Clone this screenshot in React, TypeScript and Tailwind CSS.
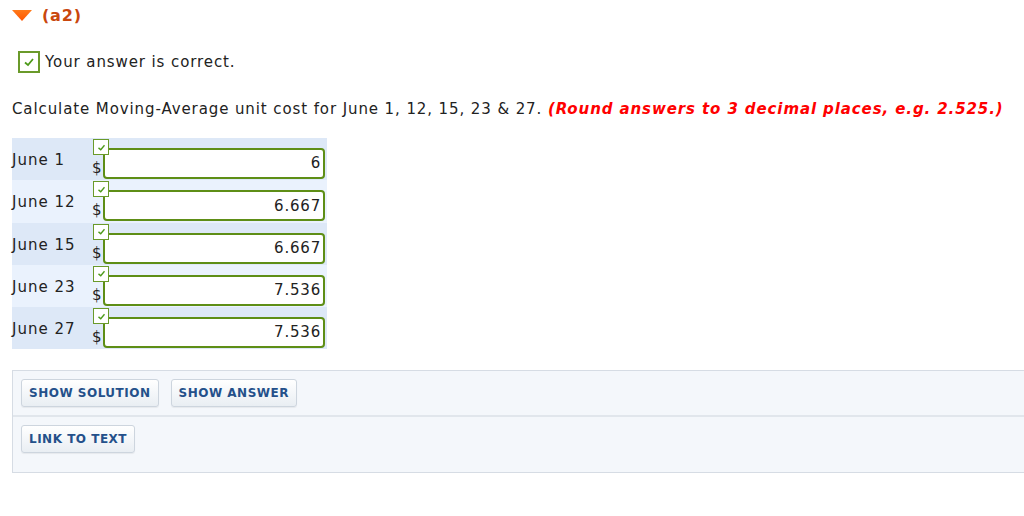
import React from "react";

const rows = [
  { label: "June 1", value: "6" },
  { label: "June 12", value: "6.667" },
  { label: "June 15", value: "6.667" },
  { label: "June 23", value: "7.536" },
  { label: "June 27", value: "7.536" },
];

function Check({ size }: { size: "lg" | "sm" }) {
  const box = size === "lg" ? "w-[22px] h-[22px] border-2" : "w-[16px] h-[16px] border";
  return (
    <div className={`${box} border-[#6a9a2a] bg-white flex items-center justify-center`}>
      <svg viewBox="0 0 12 12" className={size === "lg" ? "w-[12px] h-[12px]" : "w-[9px] h-[9px]"}>
        <path d="M2 6.5 L5 9 L10 3" fill="none" stroke="#4d9a1a" strokeWidth="1.8" />
      </svg>
    </div>
  );
}

function Btn({ children }: { children: React.ReactNode }) {
  return (
    <button className="h-[28px] px-[7px] rounded-[3px] border border-[#cdd5de] bg-gradient-to-b from-white to-[#e9eef3] text-[12px] font-bold tracking-[0.5px] text-[#24508a] shadow-[0_1px_1px_rgba(0,0,0,0.06)]">
      {children}
    </button>
  );
}

export default function App() {
  return (
    <div className="w-[1024px] h-[516px] bg-white overflow-hidden font-['DejaVu_Sans',Verdana,sans-serif] text-[#222]">
      {/* Header */}
      <div className="flex items-center gap-[10px] pl-[12px] pt-[5px] h-[26px]">
        <svg viewBox="0 0 20 11" className="w-[20px] h-[11px]">
          <defs>
            <linearGradient id="tri" x1="0" y1="0" x2="0" y2="1">
              <stop offset="0" stopColor="#ff7a1a" />
              <stop offset="1" stopColor="#ff5500" />
            </linearGradient>
          </defs>
          <path d="M0 0 H20 L10 11 Z" fill="url(#tri)" />
        </svg>
        <span className="text-[16px] font-bold tracking-[0.8px] text-[#c9470d]">(a2)</span>
      </div>

      {/* Correct notice */}
      <div className="flex items-center gap-[5px] pl-[18px] mt-[24px]">
        <Check size="lg" />
        <span className="text-[15px] tracking-[0.9px] pt-[1px]">Your answer is correct.</span>
      </div>

      {/* Question */}
      <div className="pl-[12px] mt-[24px] text-[15px] tracking-[0.9px] whitespace-nowrap">
        Calculate Moving-Average unit cost for June 1, 12, 15, 23 &amp; 27.{" "}
        <span className="font-bold italic text-[#ff0000]">(Round answers to 3 decimal places, e.g. 2.525.)</span>
      </div>

      {/* Table */}
      <div className="ml-[12px] mt-[18px] w-[315px] flex flex-col">
        {rows.map((r, i) => (
          <div key={r.label} className={`flex h-[42.3px] ${i % 2 === 0 ? "bg-[#dde8f7]" : "bg-[#eaf2fd]"}`}>
            <div className="w-[80px] pt-[12px] text-[15px] tracking-[1px] leading-[20px]">{r.label}</div>
            <div className="relative flex-1">
              <div className="absolute left-[1px] top-[1px] z-10">
                <Check size="sm" />
              </div>
              <span className="absolute left-[0px] top-[20px] text-[15px] leading-[20px]">$</span>
              <div className="absolute left-[11px] right-[2px] top-[10px] h-[31px] rounded-[4px] border-2 border-[#5e8e16] bg-white flex items-center justify-end pr-[2px] text-[15px] tracking-[0.8px]">
                {r.value}
              </div>
            </div>
          </div>
        ))}
      </div>

      {/* Button panel */}
      <div className="ml-[12px] mt-[21px] w-[1020px] border border-[#d6dce4] bg-[#f4f7fb]">
        <div className="flex gap-[12px] px-[8px] pt-[8px] pb-[8px] border-b-2 border-[#e1e6ec]">
          <Btn>SHOW SOLUTION</Btn>
          <Btn>SHOW ANSWER</Btn>
        </div>
        <div className="px-[8px] pt-[8px] pb-[19px]">
          <Btn>LINK TO TEXT</Btn>
        </div>
      </div>
    </div>
  );
}
